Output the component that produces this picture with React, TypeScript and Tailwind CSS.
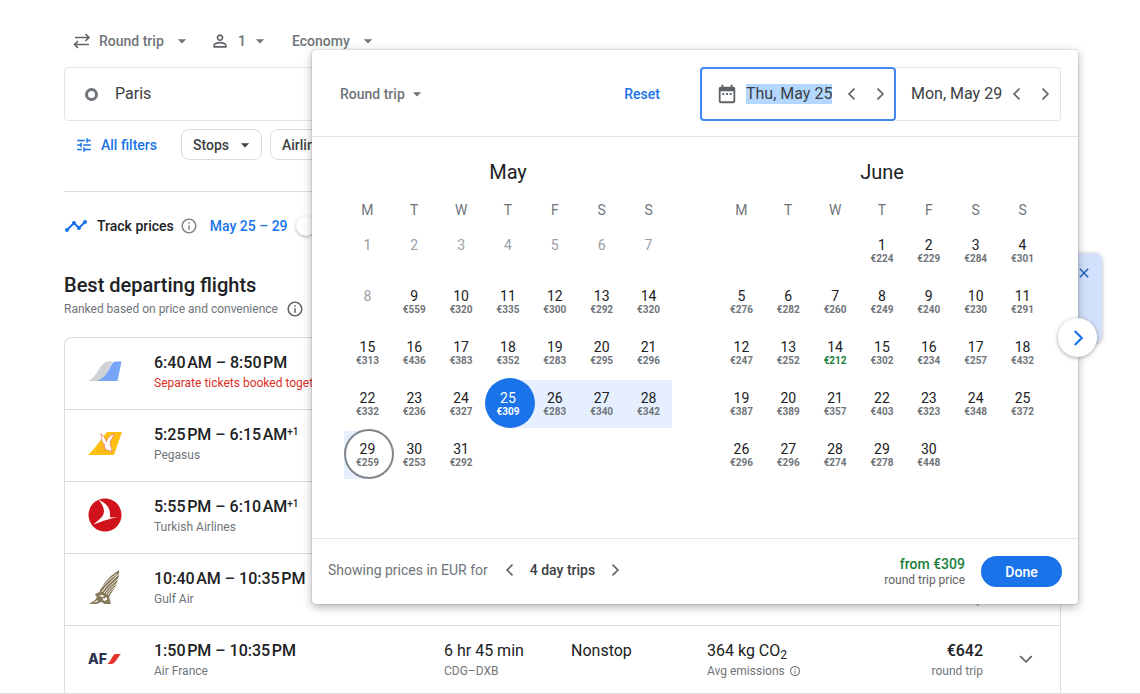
import type { ReactNode } from "react";
import { MdArrowDropDown, MdClose, MdDateRange, MdInfoOutline, MdPersonOutline, MdTimeline, MdTune } from "react-icons/md";

const WEEKDAYS = ["M", "T", "W", "T", "F", "S", "S"];

type Day = { day: number; price?: number };

const MAY_PRICES = [559, 320, 335, 300, 292, 320, 313, 436, 383, 352, 283, 295, 296, 332, 236, 327, 309, 283, 340, 342, 259, 253, 292];
const JUNE_PRICES = [
  224, 229, 284, 301, 276, 282, 260, 249, 240, 230, 291, 247, 252, 212, 302, 234, 257, 432, 387, 389, 357, 403, 323, 348, 372, 296, 296,
  274, 278, 448,
];

// prices only exist from May 9 on
const may: Day[] = Array.from({ length: 31 }, (_, i) => ({ day: i + 1, price: MAY_PRICES[i - 8] }));
const june: Day[] = JUNE_PRICES.map((price, i) => ({ day: i + 1, price }));

function toWeeks(days: Day[], offset: number) {
  const cells: (Day | null)[] = [...Array(offset).fill(null), ...days];
  while (cells.length < 35) cells.push(null);
  return [0, 1, 2, 3, 4].map((w) => cells.slice(w * 7, w * 7 + 7));
}

function Chevron({ dir, className = "" }: { dir: "left" | "right" | "down"; className?: string }) {
  const d = { left: "M15 5.5 8.5 12l6.5 6.5", right: "M9 5.5l6.5 6.5L9 18.5", down: "M5 8.5l7 7 7-7" }[dir];
  return (
    <svg viewBox="0 0 24 24" className={className} fill="none" stroke="currentColor" strokeWidth="2">
      <path d={d} />
    </svg>
  );
}

function RoundTripIcon() {
  return (
    <svg viewBox="0 0 18 16" className="mr-2 h-4 w-[18px]" fill="none" stroke="#5f6368" strokeWidth="1.600">
      <path d="M2 4.500H16M12.500 1 16 4.500 12.500 8" />
      <path d="M16 11.500H1.500M5 8 1.500 11.500 5 15" />
    </svg>
  );
}

function Dropdown({ label, value, className = "" }: { label: string; value: string; className?: string }) {
  return (
    <label className={`flex items-center font-medium ${className}`}>
      <select aria-label={label} defaultValue={value} className="appearance-none bg-transparent outline-none">
        <option>{value}</option>
      </select>
      <MdArrowDropDown className="size-5 shrink-0" />
    </label>
  );
}

function TailLogo() {
  return (
    <svg viewBox="0 0 34 20" className="h-5 w-[34px]">
      <path d="M0 20C9 17 12 1 20 0.500H24.500L15 20Z" fill="#cfd2d4" />
      <path d="M9 20C18 17 21 8 23.500 3.500Q25 0.500 27.500 0.500H33.500L29.500 20Z" fill="#76a4f7" />
    </svg>
  );
}

function PegasusLogo() {
  return (
    <svg viewBox="0 0 34 23" className="h-[23px] w-[34px]">
      <path d="M19 0H34L26 23H0C7 17 12 8 19 0Z" fill="#fdc012" />
      <g fill="#fff" stroke="#f0826a" strokeWidth="0.900" strokeLinejoin="round">
        <path d="M13 1.500c0 2 .5 3 1 4-1 1-.5 2.500 0 3.500 0 1 1 2 2 2.500l.5 3c0 3 2.500 4 5 4l2.500 2-.5-4-1-3.500c-.5-2-.5-3.500 1.500-6.500l2.500-4.500c-4 1-7.500 4-8 8-.5-2.500-1.500-3-2-4.500Z" />
        <path d="M16.500 12.500l-3 3.500M18 16.500l-3.500 3.500" fill="none" />
      </g>
    </svg>
  );
}

function TurkishLogo() {
  return (
    <svg viewBox="0 0 34 34" className="size-[34px]">
      <circle cx="17" cy="17" r="16.500" fill="#d0121b" />
      <path d="M10.500 1.900C19 5 23 10.500 21.800 19.500l8.500-.6c-8 1.600-15 3.600-24.800 7.600 5.200-4.800 10.200-7.500 10.400-13C16 9 13.500 5 10.500 1.900Z" fill="#fff" />
    </svg>
  );
}

function GulfAirLogo() {
  return (
    <svg viewBox="0 0 34 36" className="h-9 w-[34px]">
      <path d="M11 24C14 16 19 9 31 1c0 4 0 6-1 9-1 5-3 9-6 13l-3 5Z" fill="#87795a" />
      <g stroke="#fff" strokeWidth="0.900" fill="none">
        <path d="M14 23C18 16 25 11 31 5" />
        <path d="M16 24C20 18 26 14 31 9" />
        <path d="M18 25C21 20 26 17 30 13" />
        <path d="M20 26C22 22 25 20 28 17.500" />
        <path d="M13 19C18 13 23 9 29 5" />
      </g>
      <path d="M7 25.500c2-2.500 6-2.500 9-1 4 1 6 3 5.500 5.500L23 35h-6.500l-3-2-5 2H1l6-4 2-3Z" fill="#87795a" />
      <path d="M11 26.500l3.500-.5 2 1.500-2.500.5ZM14.500 29.500l4.500-1v2.500l-3 1ZM5 33.500l5-2.500-1 2Z" fill="#fff" />
    </svg>
  );
}

function AirFranceLogo() {
  return (
    <div className="flex items-center">
      <span className="font-[Inter] text-sm leading-4 font-extrabold text-[#2b3451]">AF</span>
      <svg viewBox="0 0 14 10" className="h-2.5 w-3.5">
        <path d="M0 10C4 8.500 5 0 9 0H14C11 2 9 10 4 10Z" fill="#e5322f" />
      </svg>
    </div>
  );
}

function MonthTable({ name, weeks }: { name: string; weeks: (Day | null)[][] }) {
  const isMay = name === "May";
  return (
    <section>
      <h2 className="text-center text-xl leading-7 text-[#202124]">{name}</h2>
      <table className="mt-3 w-full table-fixed border-collapse">
        <thead>
          <tr className="h-[27px]">
            {WEEKDAYS.map((d, i) => (
              <th key={i} className="p-0 align-top text-sm leading-6 font-normal text-[#70757a]">
                {d}
              </th>
            ))}
          </tr>
        </thead>
        <tbody>
          {weeks.map((week, w) => (
            <tr key={w} className="h-[51px]">
              {week.map((cell, i) => {
                const start = isMay && cell?.day === 25;
                const end = isMay && cell?.day === 29;
                const between = isMay && !!cell && cell.day > 25 && cell.day < 29;
                const cheap = cell?.price === 212;
                return (
                  <td key={i} className="relative p-0">
                    {between && <span className="absolute inset-x-0 top-0.5 h-12 bg-[#e6effd]" />}
                    {start && <span className="absolute top-0.5 right-0 left-1/2 h-12 bg-[#e6effd]" />}
                    {end && <span className="absolute top-0.5 right-1/2 left-0 h-12 bg-[#e6effd]" />}
                    {start && <span className="absolute top-0 left-0 z-10 size-[50px] rounded-full bg-[#1a73e8]" />}
                    {end && <span className="absolute top-0 left-0 z-10 size-[50px] rounded-full border-2 border-[#80868b] bg-white" />}
                    {cell && (
                      <button disabled={!cell.price} className="relative z-20 flex h-[51px] w-full flex-col items-center justify-center">
                        <span className={`text-sm leading-4 ${start ? "text-white" : cell.price ? "text-[#202124]" : "text-[#9aa0a6]"}`}>
                          {cell.day}
                        </span>
                        <span
                          className={`h-3 text-[10px] leading-3 font-bold ${
                            start ? "text-white" : cheap ? "text-[#188038]" : "text-[#70757a]"
                          }`}
                        >
                          {cell.price && `€${cell.price}`}
                        </span>
                      </button>
                    )}
                  </td>
                );
              })}
            </tr>
          ))}
        </tbody>
      </table>
    </section>
  );
}

function DateStepper({ label, value, inputClass }: { label: string; value: string; inputClass: string }) {
  return (
    <>
      <input aria-label={label} defaultValue={value} className={`text-base leading-5 text-[#3c4043] outline-none ${inputClass}`} />
      <button aria-label={`${label} earlier`} className="text-[#5f6368]">
        <Chevron dir="left" className="size-5" />
      </button>
      <button aria-label={`${label} later`} className="ml-2 text-[#5f6368]">
        <Chevron dir="right" className="size-5" />
      </button>
    </>
  );
}

function DatePicker() {
  return (
    <div
      role="dialog"
      aria-label="Choose dates"
      className="absolute top-[50px] -right-[17px] z-30 w-[766px] rounded bg-white shadow-[0_0_2px_rgba(60,64,67,0.35),0_3px_10px_rgba(60,64,67,0.4)]"
    >
      <div className="flex h-[87px] items-center border-b border-[#e3e5e8] pt-px pr-[17px] pl-7">
        <Dropdown label="Dialog trip type" value="Round trip" className="gap-0.5 text-sm text-[#70757a]" />
        <button className="mr-10 ml-auto text-sm font-medium text-[#1a73e8]">Reset</button>
        <div className="flex h-[54px] w-[196px] items-center rounded border-2 border-[#4285f4] pl-3.5">
          <MdDateRange className="mr-2 size-[22px] text-[#5f6368]" />
          <DateStepper label="Departure" value="Thu, May 25" inputClass="mr-2.5 w-[86px] bg-[#b3d7ff]" />
        </div>
        <div className="flex h-[54px] w-[165px] items-center rounded-r border border-l-0 border-[#e3e5e8] pl-[15px]">
          <DateStepper label="Return" value="Mon, May 29" inputClass="mr-1 w-[92px] bg-transparent" />
        </div>
      </div>

      <div className="grid grid-cols-2 gap-[46px] px-8 pt-[21px] pb-[58px]">
        <MonthTable name="May" weeks={toWeeks(may, 0)} />
        <MonthTable name="June" weeks={toWeeks(june, 3)} />
      </div>

      <div className="flex h-[66px] items-center border-t border-[#e3e5e8] px-4 text-sm">
        <div className="flex items-center pb-[3px]">
          <span className="text-[#70757a]">Showing prices in EUR for</span>
          <button aria-label="Shorter trip" className="ml-3 text-[#5f6368]">
            <Chevron dir="left" className="size-5" />
          </button>
          <span className="mx-2.5 font-medium text-[#3c4043]">4 day trips</span>
          <button aria-label="Longer trip" className="text-[#5f6368]">
            <Chevron dir="right" className="size-5" />
          </button>
        </div>
        <div className="ml-auto text-right">
          <p className="leading-4 font-medium text-[#188038]">from €309</p>
          <p className="text-xs leading-4 text-[#5f6368]">round trip price</p>
        </div>
        <button className="ml-4 h-[31px] w-[81px] rounded-full bg-[#1a73e8] font-medium text-white">Done</button>
      </div>

      <button
        aria-label="Next month"
        className="absolute top-[268px] -right-[19px] z-30 flex size-[39px] items-center justify-center rounded-full bg-white text-[#1a73e8] shadow-[0_1px_4px_rgba(60,64,67,0.45)]"
      >
        <Chevron dir="right" className="size-[26px]" />
      </button>
    </div>
  );
}

type FlightProps = {
  logo: ReactNode;
  depart: string;
  arrive: string;
  nextDay?: boolean;
  airline: string;
  warn?: boolean;
  last?: boolean;
  children?: ReactNode;
};

function FlightRow({ logo, depart, arrive, nextDay, airline, warn, last, children }: FlightProps) {
  return (
    <li
      className={`grid grid-cols-[89px_290fr_127fr_136fr_140fr_136fr_77px] border-t border-[#dadce0] pt-[13px] first:border-t-0 ${last ? "pb-3.5" : "pb-[18px]"}`}
    >
      <div className="flex items-center justify-center pr-2.5">{logo}</div>
      <div className="min-w-0 whitespace-nowrap">
        <p className="text-base leading-6 font-medium text-[#202124]">
          {depart} – {arrive}
          {nextDay && <sup className="text-[10px]">+1</sup>}
        </p>
        <p className={`text-xs leading-4 ${warn ? "text-[#d93025]" : "text-[#70757a]"}`}>{airline}</p>
      </div>
      {children}
    </li>
  );
}

export default function App() {
  return (
    <div className="min-h-screen overflow-hidden border-b border-[#dadce0] bg-white font-[Roboto,sans-serif] text-[#202124]">
      <div className="relative mr-[79px] ml-16 pt-7">
        <div className="flex h-[26px] items-center pl-[9px] text-sm text-[#70757a]">
          <RoundTripIcon />
          <Dropdown label="Trip type" value="Round trip" className="gap-2" />
          <MdPersonOutline className="mr-2 ml-[18px] size-5 text-[#5f6368]" />
          <Dropdown label="Passengers" value="1" className="gap-1" />
          <Dropdown label="Cabin" value="Economy" className="ml-[22px] gap-2" />
        </div>

        <div className="mt-[13px] flex h-[54px] items-center rounded border border-[#e3e5e8] pl-5">
          <span className="size-[13px] rounded-full border-[3px] border-[#70757a]" />
          <input aria-label="Where from?" defaultValue="Paris" className="ml-[17px] w-44 text-base text-[#3c4043] outline-none" />
        </div>

        <div className="mt-2 flex h-[31px] items-center text-sm font-medium">
          <button className="mr-6 ml-[11px] flex items-center gap-2 text-[#1a73e8]">
            <MdTune className="size-[18px]" />
            All filters
          </button>
          <Dropdown label="Stops" value="Stops" className="mr-2 h-[31px] gap-1.5 rounded-lg border border-[#dadce0] pr-1.5 pl-[11px] text-[#3c4043]" />
          <Dropdown label="Airlines" value="Airlines" className="h-[31px] gap-1.5 rounded-lg border border-[#dadce0] pr-1.5 pl-[11px] text-[#3c4043]" />
        </div>

        <div className="mt-[31px] flex h-[69px] items-center border-t border-[#dadce0] text-sm font-medium">
          <MdTimeline className="mr-[9px] size-6 text-[#1a73e8]" />
          Track prices
          <MdInfoOutline className="ml-1.5 size-[18px] text-[#80868b]" />
          <span className="ml-3 text-[#1a73e8]">May 25 – 29</span>
          <label className="ml-2 flex items-center">
            <input type="checkbox" role="switch" aria-label="Track prices" className="sr-only" />
            <span className="flex h-3.5 w-9 items-center rounded-full">
              <span className="size-5 shrink-0 rounded-full bg-white shadow-[0_1px_3px_rgba(60,64,67,0.45)]" />
            </span>
          </label>
        </div>

        <h1 className="mt-[11px] text-xl leading-7 font-medium">Best departing flights</h1>
        <p className="flex h-5 items-center text-xs text-[#70757a]">
          Ranked based on price and convenience
          <MdInfoOutline className="ml-2 size-[18px] text-[#5f6368]" />
        </p>

        <ul className="mt-[18px] rounded-t-lg border border-b-0 border-[#dadce0]">
          <FlightRow logo={<TailLogo />} depart={"6:40\u200aAM"} arrive={"8:50\u200aPM"} airline="Separate tickets booked together" warn />
          <FlightRow logo={<PegasusLogo />} depart={"5:25\u200aPM"} arrive={"6:15\u200aAM"} nextDay airline="Pegasus" />
          <FlightRow logo={<TurkishLogo />} depart={"5:55\u200aPM"} arrive={"6:10\u200aAM"} nextDay airline="Turkish Airlines" />
          <FlightRow logo={<GulfAirLogo />} depart={"10:40\u200aAM"} arrive={"10:35\u200aPM"} airline="Gulf Air">
            <p className="col-start-6 self-end text-right text-xs leading-4 text-[#70757a]">round trip</p>
          </FlightRow>
          <FlightRow logo={<AirFranceLogo />} depart={"1:50\u200aPM"} arrive={"10:35\u200aPM"} airline="Air France" last>
            <div>
              <p className="text-base leading-6">6 hr 45 min</p>
              <p className="text-xs leading-4 text-[#70757a]">CDG–DXB</p>
            </div>
            <p className="text-base leading-6">Nonstop</p>
            <div>
              <p className="h-6 text-base leading-6">
                364 kg CO<sub className="text-xs">2</sub>
              </p>
              <p className="flex items-center gap-1 text-xs leading-4 text-[#70757a]">
                Avg emissions <MdInfoOutline className="size-3" />
              </p>
            </div>
            <div className="text-right">
              <p className="text-base leading-6 font-medium">€642</p>
              <p className="text-xs leading-4 text-[#70757a]">round trip</p>
            </div>
            <button aria-label="Flight details" className="flex items-center justify-center pl-2 text-[#5f6368]">
              <Chevron dir="down" className="size-5" />
            </button>
          </FlightRow>
        </ul>

        <DatePicker />

        <aside className="absolute top-[253px] -right-[41px] z-10 h-[90px] w-20 rounded-lg bg-[#d3e0fb] shadow-[0_1px_4px_rgba(60,64,67,0.4)]">
          <button aria-label="Dismiss" className="absolute top-3 right-2.5 text-[#1859b8]">
            <MdClose className="size-4" />
          </button>
        </aside>
      </div>
    </div>
  );
}
